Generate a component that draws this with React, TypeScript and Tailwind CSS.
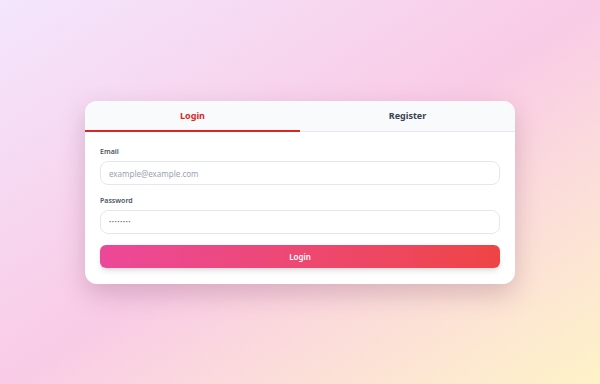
export default function App() {
  return (
    <div
      className="w-[600px] h-[384px] flex items-center justify-center bg-gradient-to-br from-[#f3e6fd] via-[#f9cbe6] to-[#fef3c7]"
      style={{ fontFamily: '"Noto Sans", "Open Sans", sans-serif' }}
    >
      <div className="w-[430px] bg-white rounded-xl shadow-[0_10px_25px_rgba(120,60,90,0.25)] overflow-hidden mt-[1px]">
        <div className="flex bg-[#f9fafb] border-b border-[#e5e7eb] h-[31px]">
          <button className="flex-1 flex items-center justify-center text-[9px] font-bold text-[#dc2626] border-b-2 border-[#dc2626] -mb-px">
            Login
          </button>
          <button className="flex-1 flex items-center justify-center text-[9px] font-bold text-[#374151]">
            Register
          </button>
        </div>
        <div className="px-[15px] pt-[15px] pb-[16px] flex flex-col">
          <label className="text-[7px] font-semibold text-[#4b5563] leading-[10px]">Email</label>
          <input
            className="mt-[4px] h-[24px] rounded-lg border border-[#e5e7eb] px-[8px] text-[8px] text-[#374151] placeholder:text-[#9ca3af] outline-none"
            placeholder="example@example.com"
          />
          <label className="mt-[11px] text-[7px] font-semibold text-[#4b5563] leading-[10px]">Password</label>
          <input
            className="mt-[4px] h-[24px] rounded-lg border border-[#e5e7eb] px-[8px] text-[6px] tracking-[0.5px] placeholder:text-[#6b7280] outline-none"
            placeholder="••••••••"
          />
          <button className="mt-[11px] h-[23px] rounded-md bg-gradient-to-r from-[#ec4899] to-[#ef4444] text-white text-[8px] font-semibold shadow-md">
            Login
          </button>
        </div>
      </div>
    </div>
  );
}
